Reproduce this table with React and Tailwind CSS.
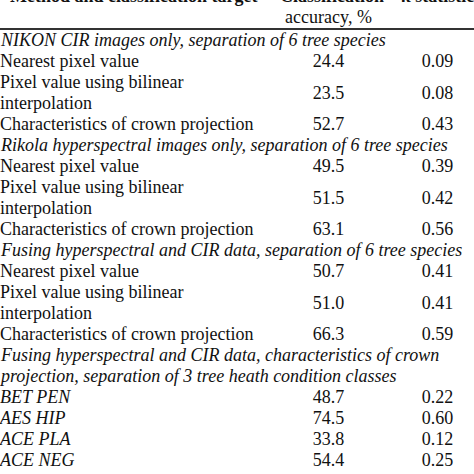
import React from "react";

const sections = [
  {
    title: ["NIKON CIR images only, separation of 6 tree species"],
    rows: [
      { name: "Nearest pixel value", acc: "24.4", k: "0.09" },
      { name: "Pixel value using bilinear interpolation", acc: "23.5", k: "0.08" },
      { name: "Characteristics of crown projection", acc: "52.7", k: "0.43" },
    ],
  },
  {
    title: ["Rikola hyperspectral images only, separation of 6 tree species"],
    rows: [
      { name: "Nearest pixel value", acc: "49.5", k: "0.39" },
      { name: "Pixel value using bilinear interpolation", acc: "51.5", k: "0.42" },
      { name: "Characteristics of crown projection", acc: "63.1", k: "0.56" },
    ],
  },
  {
    title: ["Fusing hyperspectral and CIR data, separation of 6 tree species"],
    rows: [
      { name: "Nearest pixel value", acc: "50.7", k: "0.41" },
      { name: "Pixel value using bilinear interpolation", acc: "51.0", k: "0.41" },
      { name: "Characteristics of crown projection", acc: "66.3", k: "0.59" },
    ],
  },
  {
    title: [
      "Fusing hyperspectral and CIR data, characteristics of crown",
      "projection, separation of 3 tree heath condition classes",
    ],
    rows: [
      { name: "BET PEN", acc: "48.7", k: "0.22", italic: true },
      { name: "AES HIP", acc: "74.5", k: "0.60", italic: true },
      { name: "ACE PLA", acc: "33.8", k: "0.12", italic: true },
      { name: "ACE NEG", acc: "54.4", k: "0.25", italic: true },
      { name: "TIL COR", acc: "71.4", k: "0.51", italic: true },
    ],
  },
];

function Row({ row }) {
  return (
    <div className="grid grid-cols-[280px_97px_121px] items-center">
      <div className={"max-w-[262px] " + (row.italic ? "italic" : "")}>{row.name}</div>
      <div className="text-center">{row.acc}</div>
      <div className="text-center">{row.k}</div>
    </div>
  );
}

export default function App() {
  return (
    <div className="w-[474px] h-[474px] overflow-hidden bg-white text-[#111]">
      <div
        className="w-[498px] mt-[-14px] text-[18px] leading-[21px]"
        style={{ fontFamily: '"Liberation Serif", "Times New Roman", serif' }}
      >
        <div className="grid grid-cols-[280px_97px_121px] border-b-2 border-[#333]">
          <div className="font-bold pl-[10px]">Method and classification target</div>
          <div className="text-center whitespace-nowrap">
            <div className="font-bold">Classification</div>
            <div>accuracy, %</div>
          </div>
          <div className="text-center font-bold">κ statistic</div>
        </div>
        {sections.map((s, i) => (
          <div key={i}>
            <div className="italic pl-[1px]">
              {s.title.map((t, j) => (
                <div key={j}>{t}</div>
              ))}
            </div>
            {s.rows.map((r, j) => (
              <Row key={j} row={r} />
            ))}
          </div>
        ))}
      </div>
    </div>
  );
}
